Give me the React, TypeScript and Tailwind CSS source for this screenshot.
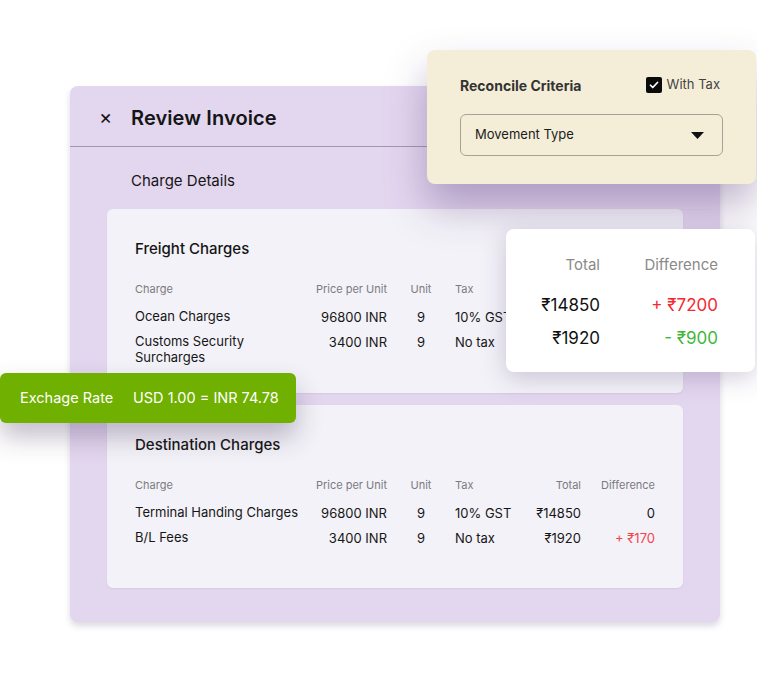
import React from "react";

const font = { fontFamily: "Inter, 'Noto Sans', sans-serif" };

type Row = { name: string; price: string; unit: string; tax: string; total: string; diff: string; diffColor?: string };

function ChargeTable({ rows, showTotals }: { rows: Row[]; showTotals: boolean }) {
  const grid = "grid grid-cols-[170px_82px_68px_80px_46px_74px]";
  return (
    <div className="mt-[22px]">
      <div className={`${grid} text-[11px] leading-[16px] text-[#7b7b80]`}>
        <div>Charge</div>
        <div className="text-right">Price per Unit</div>
        <div className="text-center">Unit</div>
        <div>Tax</div>
        <div className="text-right">{showTotals ? "Total" : ""}</div>
        <div className="text-right">{showTotals ? "Difference" : ""}</div>
      </div>
      <div className="mt-[11px] flex flex-col gap-[8px]">
        {rows.map((r) => (
          <div key={r.name} className={`${grid} text-[13px] leading-[16px] text-[#161616]`}>
            <div>{r.name}</div>
            <div className="text-right pt-[1px]">{r.price}</div>
            <div className="text-center pt-[1px]">{r.unit}</div>
            <div className="pt-[1px]">{r.tax}</div>
            <div className="text-right pt-[1px]">{showTotals ? r.total : ""}</div>
            <div className={`text-right pt-[1px] ${r.diffColor ?? ""}`}>{showTotals ? r.diff : ""}</div>
          </div>
        ))}
      </div>
    </div>
  );
}

export default function App() {
  return (
    <div className="relative w-[757px] h-[673px] bg-white overflow-hidden" style={font}>
      {/* Main panel */}
      <div className="absolute left-[70px] top-[86px] w-[650px] h-[536px] rounded-[8px] bg-[#e3d6ef] shadow-[0_4px_6px_rgba(60,40,90,0.18)]">
        <div className="h-[61px] flex items-center border-b border-[#a396ae] pl-[29px] pt-[3px]">
          <span className="w-[32px] text-[20px] leading-none text-[#111] pb-[2px]">×</span>
          <span className="text-[20px] font-semibold text-[#151515] tracking-[0.1px]">Review Invoice</span>
        </div>
        <div className="pl-[61px] pt-[24px] text-[15px] leading-[20px] text-[#151515]">Charge Details</div>

        <div className="ml-[37px] mt-[18px] w-[576px] flex flex-col gap-[12px]">
          <div className="h-[184px] rounded-[6px] bg-[#f3f2f8] px-[28px] pt-[30px] shadow-[0_1px_2px_rgba(0,0,0,0.06)]">
            <div className="text-[15px] leading-[20px] font-medium text-[#151515]">Freight Charges</div>
            <ChargeTable
              showTotals={false}
              rows={[
                { name: "Ocean Charges", price: "96800 INR", unit: "9", tax: "10% GST", total: "₹14850", diff: "0" },
                { name: "Customs Security Surcharges", price: "3400 INR", unit: "9", tax: "No tax", total: "₹1920", diff: "+ ₹170", diffColor: "text-[#f2454a]" },
              ]}
            />
          </div>
          <div className="h-[183px] rounded-[6px] bg-[#f3f2f8] px-[28px] pt-[30px] shadow-[0_1px_2px_rgba(0,0,0,0.06)]">
            <div className="text-[15px] leading-[20px] font-medium text-[#151515]">Destination Charges</div>
            <ChargeTable
              showTotals={true}
              rows={[
                { name: "Terminal Handing Charges", price: "96800 INR", unit: "9", tax: "10% GST", total: "₹14850", diff: "0" },
                { name: "B/L Fees", price: "3400 INR", unit: "9", tax: "No tax", total: "₹1920", diff: "+ ₹170", diffColor: "text-[#f2454a]" },
              ]}
            />
          </div>
        </div>
      </div>

      {/* Reconcile criteria card */}
      <div className="absolute left-[427px] top-[50px] w-[329px] h-[134px] rounded-[8px] bg-[#f4eed8] shadow-[0_22px_40px_rgba(90,60,120,0.38)] px-[33px] pt-[24px]">
        <div className="flex items-center justify-between">
          <span className="text-[14px] font-bold text-[#333] leading-[20px] pt-[2px]">Reconcile Criteria</span>
          <div className="flex items-center gap-[5px] mr-[3px]">
            <span className="w-[16px] h-[16px] rounded-[2px] bg-[#0a0a0a] flex items-center justify-center">
              <svg width="12" height="12" viewBox="0 0 24 24" fill="none" stroke="white" strokeWidth="3.5" strokeLinecap="round" strokeLinejoin="round">
                <path d="M5 12.5l4.5 4.5L19 7" />
              </svg>
            </span>
            <span className="text-[13px] text-[#444]">With Tax</span>
          </div>
        </div>
        <div className="mt-[18px] h-[42px] rounded-[6px] border border-[#a8a296] flex items-center justify-between pl-[14px] pr-[18px]">
          <span className="text-[13px] text-[#1c1c1c]">Movement Type</span>
          <svg width="13" height="7" viewBox="0 0 13 7">
            <path d="M0 0h13L6.5 7z" fill="#111" />
          </svg>
        </div>
      </div>

      {/* Totals card */}
      <div className="absolute left-[506px] top-[229px] w-[249px] h-[143px] rounded-[8px] bg-white shadow-[0_6px_24px_rgba(80,60,110,0.25)]">
        <div className="grid grid-cols-[94px_118px] pt-[26px] text-right">
          <div className="text-[15px] leading-[20px] text-[#8a8a8a]">Total</div>
          <div className="text-[15px] leading-[20px] text-[#8a8a8a]">Difference</div>
          <div className="mt-[20px] text-[17px] leading-[20px] text-[#111]">₹14850</div>
          <div className="mt-[20px] text-[17px] leading-[20px] text-[#f52a2f]">+ ₹7200</div>
          <div className="mt-[13px] text-[17px] leading-[20px] text-[#111]">₹1920</div>
          <div className="mt-[13px] text-[17px] leading-[20px] text-[#3fb83c]">- ₹900</div>
        </div>
      </div>

      {/* Exchange rate bar */}
      <div className="absolute left-0 top-[373px] w-[296px] h-[50px] rounded-[6px] bg-[#70b000] shadow-[0_14px_26px_rgba(60,40,80,0.3)] flex items-center pl-[20px] text-[14.5px] text-white">
        <span className="w-[113px]">Exchage Rate</span>
        <span>USD 1.00 = INR 74.78</span>
      </div>
    </div>
  );
}
